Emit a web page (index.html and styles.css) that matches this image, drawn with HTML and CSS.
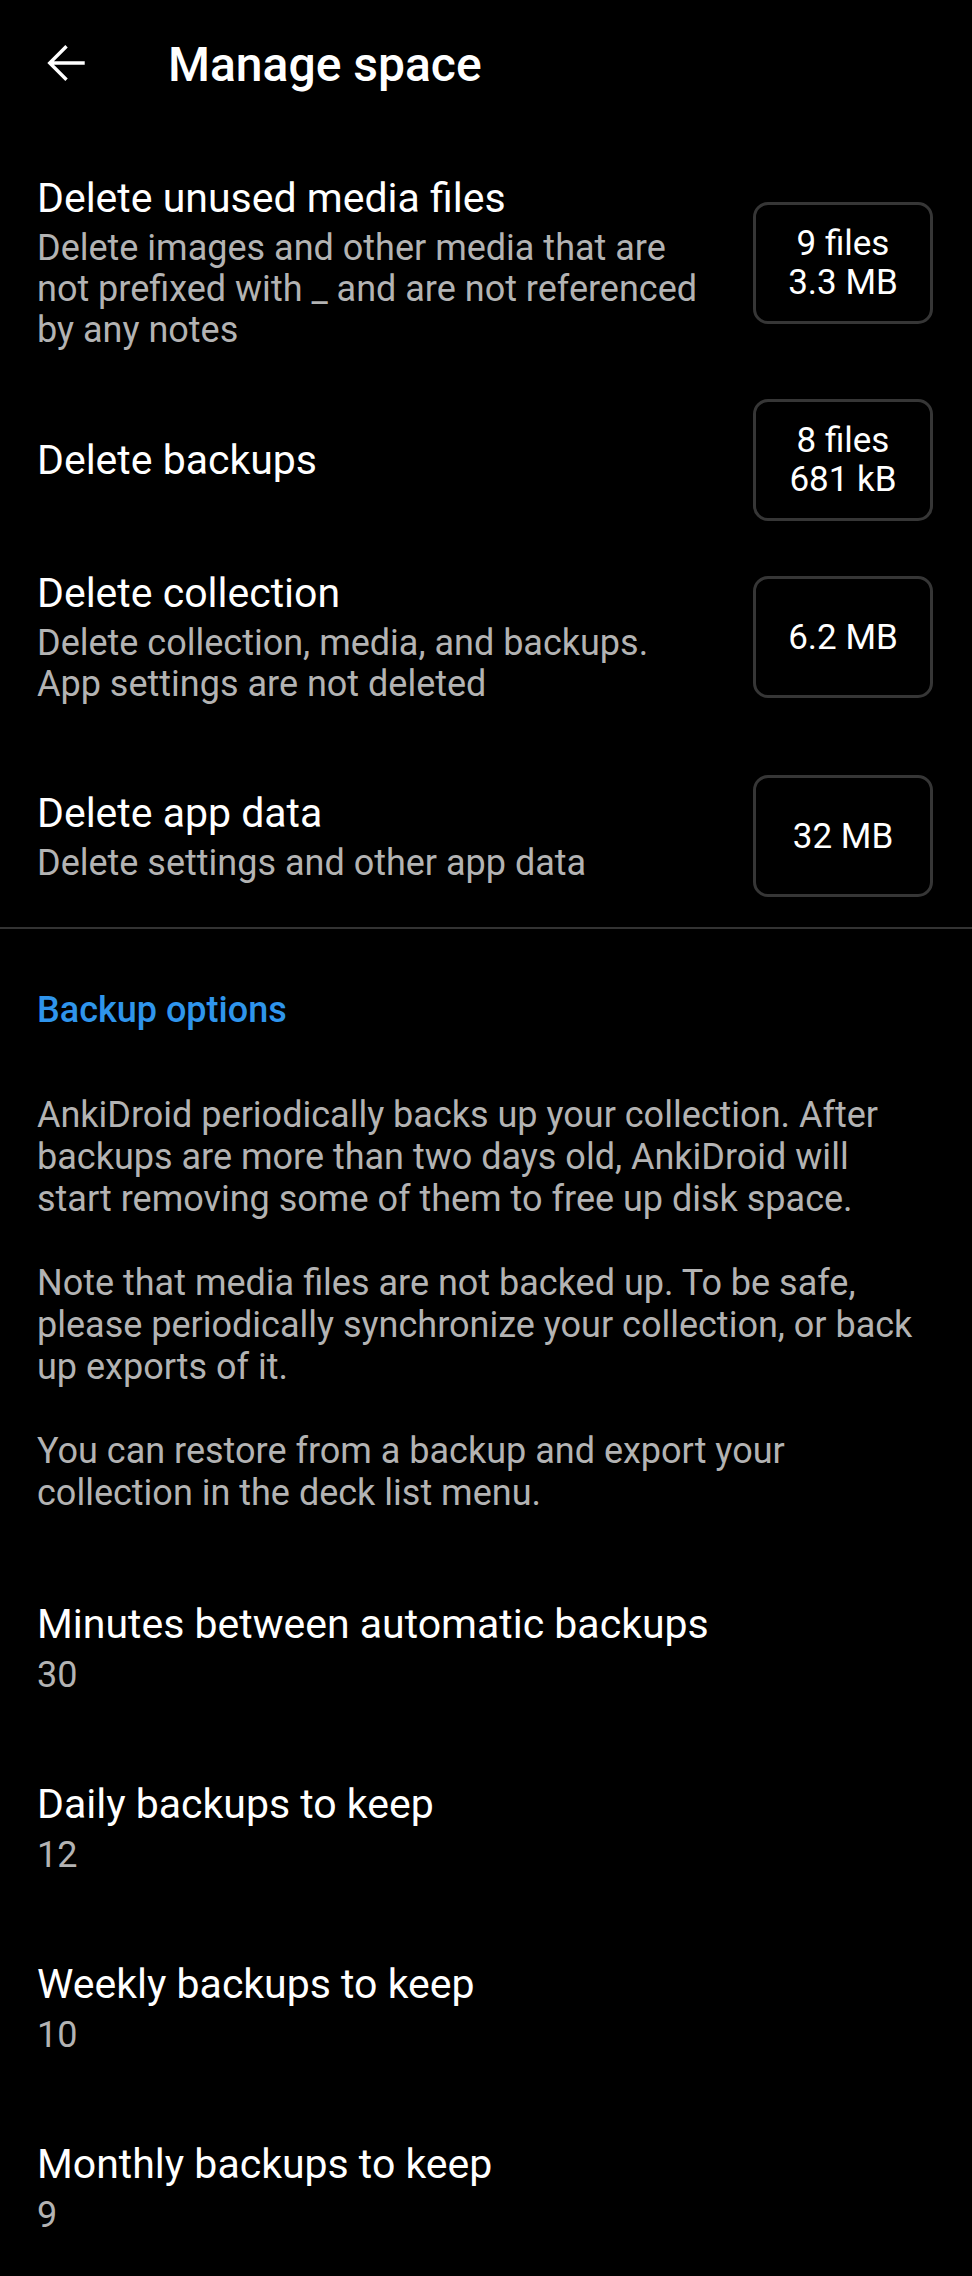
FILE: index.html
```html
<!DOCTYPE html>
<html lang="en">
<head>
<meta charset="utf-8">
<title>Manage space</title>
<link rel="stylesheet" href="styles.css">
</head>
<body>
<div class="screen">
  <header class="toolbar">
    <svg class="back" viewBox="0 0 24 24" aria-hidden="true">
      <path d="M19.6 12H4.6M11.8 4.8L4.6 12l7.2 7.2" fill="none" stroke="#fff" stroke-width="1.45" stroke-linejoin="miter"/>
    </svg>
    <h1 class="title">Manage space</h1>
  </header>

  <section class="storage">
    <div class="pref pref-first">
      <div class="pref-text">
        <div class="pref-title">Delete unused media files</div>
        <div class="pref-summary">Delete images and other media that are not prefixed with _ and are not referenced by any notes</div>
      </div>
      <div class="size-box">9 files<br>3.3 MB</div>
    </div>
    <div class="pref">
      <div class="pref-text">
        <div class="pref-title">Delete backups</div>
      </div>
      <div class="size-box">8 files<br>681 kB</div>
    </div>
    <div class="pref pref-third">
      <div class="pref-text">
        <div class="pref-title">Delete collection</div>
        <div class="pref-summary">Delete collection, media, and backups. App settings are not deleted</div>
      </div>
      <div class="size-box">6.2 MB</div>
    </div>
    <div class="pref pref-last">
      <div class="pref-text">
        <div class="pref-title">Delete app data</div>
        <div class="pref-summary">Delete settings and other app data</div>
      </div>
      <div class="size-box">32 MB</div>
    </div>
  </section>

  <div class="divider"></div>

  <section class="backup">
    <h2 class="category">Backup options</h2>
    <div class="intro">
      <p>AnkiDroid periodically backs up your collection. After backups are more than two days old, AnkiDroid will start removing some of them to free up disk space.</p>
      <p>Note that media files are not backed up. To be safe, please periodically synchronize your collection, or back up exports of it.</p>
      <p>You can restore from a backup and export your collection in the deck list menu.</p>
    </div>
    <div class="setting">
      <div class="pref-title">Minutes between automatic backups</div>
      <div class="setting-value">30</div>
    </div>
    <div class="setting">
      <div class="pref-title">Daily backups to keep</div>
      <div class="setting-value">12</div>
    </div>
    <div class="setting">
      <div class="pref-title">Weekly backups to keep</div>
      <div class="setting-value">10</div>
    </div>
    <div class="setting setting-last">
      <div class="pref-title">Monthly backups to keep</div>
      <div class="setting-value">9</div>
    </div>
  </section>
</div>
</body>
</html>
```

FILE: styles.css
```css
html {
  background: #000;
  overflow: hidden;
}

body {
  margin: 0;
  background: #000;
  color: #fff;
  font-family: Roboto, "Noto Sans", "Liberation Sans", sans-serif;
}

.screen {
  width: 972px;
}

.toolbar {
  height: 130px;
  display: flex;
  align-items: center;
  padding-left: 39px;
  box-sizing: border-box;
}

.back {
  width: 56px;
  height: 56px;
  flex: 0 0 56px;
  margin-bottom: 4px;
}

.title {
  margin: 0 0 0 73px;
  font-size: 48px;
  line-height: 56px;
  font-weight: 500;
  color: #fff;
}

.pref {
  display: flex;
  align-items: center;
  gap: 48px;
  padding: 24px 39px 24px 37px;
}

.pref-first {
  padding-top: 44px;
}

.pref-third {
  padding-bottom: 35px;
}

.pref-last {
  padding-top: 35px;
  padding-bottom: 30px;
}

.pref-text {
  flex: 1 1 auto;
  min-width: 0;
}

.pref-title {
  font-size: 41px;
  line-height: 48px;
  color: #fff;
}

.pref-summary {
  margin-top: 6px;
  font-size: 36px;
  line-height: 41px;
  color: #b3b3b3;
}

.size-box {
  flex: 0 0 180px;
  height: 122px;
  box-sizing: border-box;
  border: 3px solid #363636;
  border-radius: 15px;
  display: flex;
  align-items: center;
  justify-content: center;
  text-align: center;
  font-size: 35px;
  line-height: 39px;
  color: #fff;
}

.divider {
  height: 2px;
  background: #333;
}

.category {
  margin: 0;
  padding: 61px 37px 0;
  font-size: 36px;
  line-height: 41px;
  font-weight: 500;
  color: #2f95ec;
}

.intro {
  margin: 63px 0 44px;
  padding: 0 50px 0 37px;
  font-size: 36px;
  line-height: 42px;
  color: #b3b3b3;
}

.intro p {
  margin: 0;
}

.intro p + p {
  margin-top: 42px;
}

.setting {
  padding: 42px 37px;
}

.setting-last {
  padding-bottom: 20px;
}

.setting-value {
  margin-top: 7px;
  font-size: 36px;
  line-height: 41px;
  color: #b3b3b3;
}
```
